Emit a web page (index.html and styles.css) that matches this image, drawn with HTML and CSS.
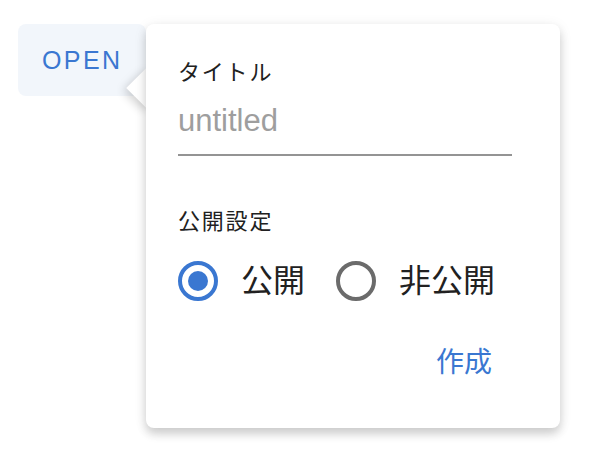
FILE: index.html
```html
<!DOCTYPE html>
<html lang="ja">

<head>
    <meta charset="UTF-8">
    <meta name="viewport" content="width=device-width, initial-scale=1.0">
    <title>Create menu</title>

    <link rel="stylesheet" href="styles.css">
</head>

<body>
    <div class="Page">
        <button class="OpenBtn" type="button">OPEN</button>

        <div class="Menu">
            <form class="Menu-card">
                <div class="Field">
                    <label class="Field-label" for="title">タイトル</label>
                    <input class="Field-input" id="title" type="text" placeholder="untitled">
                </div>

                <div class="Field-label Field-label--group">公開設定</div>
                <div class="Radios">
                    <label class="Radio is-checked">
                        <svg class="Radio-icon" width="40" height="40" viewBox="0 0 40 40">
                            <circle cx="20" cy="20" r="18" fill="none" stroke="currentColor" stroke-width="4"/>
                            <circle cx="20" cy="20" r="10" fill="currentColor"/>
                        </svg>
                        <span class="Radio-label">公開</span>
                    </label>
                    <label class="Radio">
                        <svg class="Radio-icon" width="40" height="40" viewBox="0 0 40 40">
                            <circle cx="20" cy="20" r="18" fill="none" stroke="currentColor" stroke-width="4"/>
                        </svg>
                        <span class="Radio-label">非公開</span>
                    </label>
                </div>

                <div class="Actions">
                    <button class="TextBtn" type="button">作成</button>
                </div>
            </form>
        </div>
    </div>
</body>

</html>
```

FILE: styles.css
```css
html,
body {
    background: #ffffff;
    margin: 0;
}

body {
    font-family: "Liberation Sans", "Noto Sans CJK JP", sans-serif;
    color: #212121;
}

.Page {
    position: relative;
    min-height: 412px;
    padding: 24px 18px;
}

.OpenBtn {
    display: block;
    height: 72px;
    padding: 0 24px;
    border: 0;
    border-radius: 8px;
    background: #f2f6fb;
    color: #3a77d1;
    font: 25px "Liberation Sans", sans-serif;
    letter-spacing: 2.4px;
    cursor: pointer;
}

/* popup menu sits over the page, next to the button */
.Menu {
    position: absolute;
    z-index: 1;
    top: 24px;
    left: 146px;
}

.Menu::before {
    content: "";
    position: absolute;
    z-index: -1;
    left: -14px;
    top: 50px;
    width: 28px;
    height: 28px;
    background: #ffffff;
    transform: rotate(45deg);
    box-shadow: 0 4px 10px rgba(0, 0, 0, 0.18);
}

.Menu-card {
    position: relative;
    box-sizing: border-box;
    width: 414px;
    height: 404px;
    padding: 33px 48px 0 32px;
    background: #ffffff;
    border-radius: 8px;
    box-shadow: 0 6px 10px rgba(0, 0, 0, 0.16), 0 2px 14px rgba(0, 0, 0, 0.08);
}

.Field {
    display: flex;
    flex-direction: column;
}

.Field-label {
    display: block;
    font-size: 22px;
    line-height: 32px;
    letter-spacing: 1.8px;
    color: #212121;
}

.Field-input {
    box-sizing: border-box;
    margin-top: 12px;
    height: 55px;
    padding: 0 0 13px;
    border: 0;
    border-bottom: 2px solid #949494;
    outline: none;
    font: 31px/40px "Liberation Sans", sans-serif;
    color: #212121;
    background: transparent;
}

.Field-input::placeholder {
    color: #9e9e9e;
}

.Field-label--group {
    margin-top: 50px;
}

.Radios {
    display: flex;
    align-items: center;
    height: 48px;
    margin-top: 19px;
}

.Radio {
    display: flex;
    flex-shrink: 0;
    align-items: center;
    gap: 23px;
    margin-right: 31px;
    color: #6b6b6b;
    white-space: nowrap;
}

.Radio.is-checked {
    color: #3a77d1;
}

.Radio-icon {
    flex-shrink: 0;
}

.Radio-label {
    font-size: 32px;
    line-height: 40px;
    color: #212121;
}

.Actions {
    display: flex;
    justify-content: flex-end;
    margin-top: 31px;
}

.TextBtn {
    height: 48px;
    padding: 0 20px 0 24px;
    border: 0;
    background: transparent;
    color: #3a77d1;
    font: 28px "Liberation Sans", "Noto Sans CJK JP", sans-serif;
    cursor: pointer;
}
```
